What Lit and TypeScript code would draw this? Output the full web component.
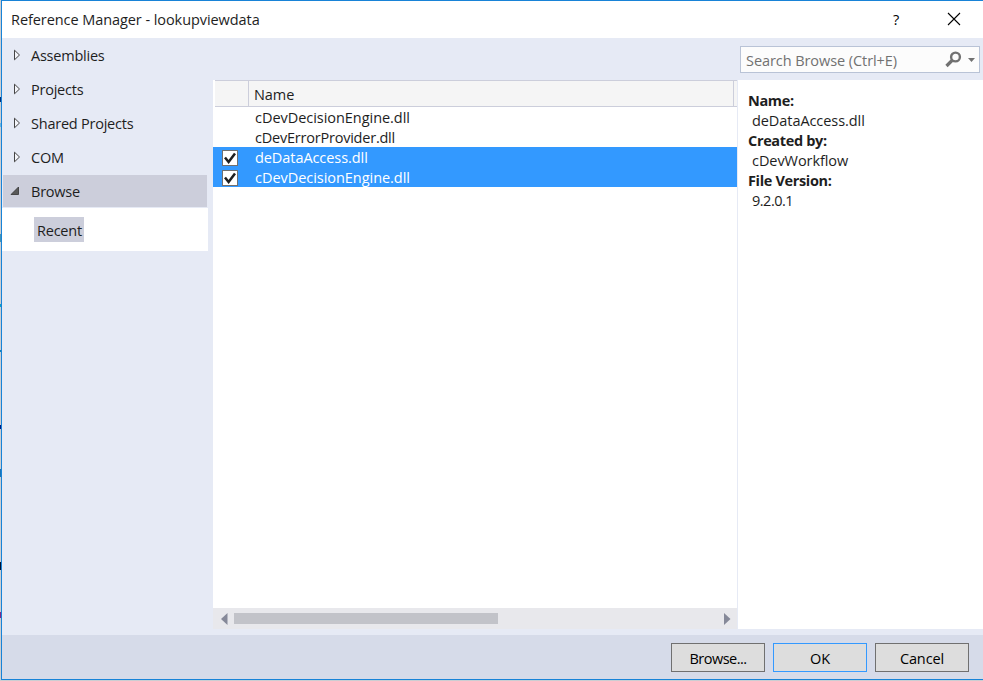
import { LitElement, html, css, svg, nothing } from "lit";
import { customElement, state } from "lit/decorators.js";
import { classMap } from "lit/directives/class-map.js";

interface RefRow {
  name: string;
  checked: boolean;
  tracking: number;
}

@customElement("app-root")
export class AppRoot extends LitElement {
  @state() private rows: RefRow[] = [
    { name: "cDevDecisionEngine.dll", checked: false, tracking: -0.04 },
    { name: "cDevErrorProvider.dll", checked: false, tracking: -0.22 },
    { name: "deDataAccess.dll", checked: true, tracking: -0.07 },
    { name: "cDevDecisionEngine.dll", checked: true, tracking: -0.04 },
  ];

  private groups = ["Assemblies", "Projects", "Shared Projects", "COM"];

  private specks = [
    { y: 97, h: 5, c: "#00307c" },
    { y: 123, h: 4, c: "#6cb6e0" },
    { y: 234, h: 8, c: "#4393b5" },
    { y: 304, h: 3, c: "#10a0c8" },
    { y: 350, h: 2, c: "#1080b8" },
    { y: 425, h: 4, c: "#001a80" },
    { y: 469, h: 8, c: "#1874b8" },
    { y: 562, h: 8, c: "#001030" },
    { y: 612, h: 6, c: "#802888" },
  ];

  static styles = css`
    :host {
      display: block;
      position: relative;
      width: 983px;
      height: 681px;
      overflow: hidden;
      background: #ccced2;
      font-family: "Open Sans", "Noto Sans", sans-serif;
      font-size: 14.5px;
      letter-spacing: -0.07px;
      line-height: 20px;
      color: #1e1e1e;
      white-space: nowrap;
    }
    * { box-sizing: border-box; }
    svg { display: block; flex: none; }
    .speck { position: absolute; left: 0; width: 1px; }
    .window {
      display: flex;
      flex-direction: column;
      height: 680px;
      margin-left: 1px;
      border: 1px solid #1883d7;
      border-right: 0;
      background: #e6eaf5;
    }
    .title {
      display: flex;
      align-items: center;
      height: 37px;
      flex: none;
      padding: 0 22px 0 9px;
      background: #fff;
    }
    .title svg { margin-bottom: 1px; }
    .title .caption { flex: 1; }
    .help { width: 8px; margin-right: 46px; color: #000; }
    .body { display: flex; flex: 1; min-height: 0; }
    .side { width: 211px; padding-top: 1px; letter-spacing: -0.23px; }
    .group {
      display: flex;
      align-items: center;
      height: 32px;
      margin: 0 1px 2px;
      padding-left: 9px;
    }
    .group span { padding-top: 2px; }
    .group svg { width: 12px; margin-right: 7px; }
    .group.open {
      width: 204px;
      background: #cccedb;
      margin-bottom: 1px;
      padding-left: 7px;
    }
    .group.open svg { margin-right: 9px; }
    .sub { width: 206px; height: 43px; padding: 9px 0 0 32px; background: #fff; }
    .chip {
      width: 50px;
      height: 25px;
      padding: 4px 0 0 3px;
      background: #cccedb;
    }
    .list {
      display: flex;
      flex-direction: column;
      width: 524px;
      height: 549px;
      margin-top: 42px;
      background: #fff;
    }
    .head {
      display: flex;
      height: 27px;
      margin-left: 2px;
      background: #f5f5f5;
      border: solid #cccedb;
      border-width: 1px 0;
      line-height: 27px;
    }
    .head .tick { width: 34px; border-right: 1px solid #cccedb; }
    .head .name { width: 485px; padding-left: 5px; border-right: 1px solid #cccedb; }
    .rows { flex: 1; }
    .row {
      display: flex;
      align-items: center;
      height: 20px;
      padding: 2px 0 0 42px;
    }
    .row.on { padding-left: 9px; background: #3399ff; color: #fff; }
    .box { width: 16px; height: 16px; margin-right: 17px; }
    .scroll {
      display: flex;
      align-items: center;
      height: 21px;
      padding: 0 6px 0 8px;
      background: #e8e8ec;
    }
    .track { flex: 1; padding-left: 6px; }
    .thumb { width: 264px; height: 11px; background: #c2c3c9; }
    .right { flex: 1; display: flex; flex-direction: column; padding-top: 8px; }
    .search {
      display: flex;
      align-items: center;
      width: 240px;
      height: 27px;
      margin: 0 0 7px 3px;
      padding-left: 5px;
      border: 1px solid #b9c3d6;
      background: #fcfcfc;
      color: #717171;
    }
    .search .hint { width: 199px; padding-top: 2px; }
    .details { height: 549px; margin-left: 1px; padding: 11px 0 0 10px; background: #fff; }
    .details dl, .details dd, .details dt { margin: 0; }
    .details dt { font-weight: 700; letter-spacing: -0.34px; }
    .details dd { padding-left: 4px; }
    .details .version { letter-spacing: -0.5px; }
    .foot {
      display: flex;
      justify-content: flex-end;
      gap: 8px;
      height: 44px;
      flex: none;
      padding: 8px 14px 0 0;
      background: #d6dbe9;
    }
    button {
      width: 94px;
      height: 29px;
      padding: 2px 0 0;
      border: 1px solid #707070;
      background: #ddd;
      font: inherit;
      letter-spacing: -0.1px;
      color: #000;
    }
    button.browse { letter-spacing: -0.5px; }
    button.default { border-color: #3399ff; }
  `;

  private toggle(i: number) {
    this.rows = this.rows.map((r, n) => (n === i ? { ...r, checked: !r.checked } : r));
  }

  private check() {
    return html`<svg class="box" viewBox="0 0 16 16">
      ${svg`<rect x=".5" y=".5" width="15" height="15" fill="#fff" stroke="#707070"/>
      <path d="M3 7.4 6.6 12 13 3.4" fill="none" stroke="#1e1e1e" stroke-width="2.5"/>`}
    </svg>`;
  }

  render() {
    return html`
      ${this.specks.map(
        (s) => html`<i class="speck" style="top:${s.y}px;height:${s.h}px;background:${s.c}"></i>`
      )}
      <div class="window">
        <div class="title">
          <span class="caption">Reference Manager - lookupviewdata</span>
          <span class="help">?</span>
          <svg width="14" height="14" viewBox="0 0 14 14">
            <path d="M1 1 13 13M13 1 1 13" fill="none" stroke="#000" stroke-width="1.1" />
          </svg>
        </div>
        <div class="body">
          <nav class="side">
            ${this.groups.map(
              (g) => html`<div class="group">
                <svg width="12" height="12" viewBox="0 0 12 12">
                  <path d="M2.5 1.2 7.5 6 2.5 10.8Z" fill="#f4f5fa" stroke="#444" />
                </svg>
                <span>${g}</span>
              </div>`
            )}
            <div class="group open">
              <svg width="12" height="12" viewBox="0 0 12 12">
                <path d="M8.5 2V9.5H1Z" fill="#595959" stroke="#333" stroke-width=".8" />
              </svg>
              <span>Browse</span>
            </div>
            <div class="sub"><div class="chip">Recent</div></div>
          </nav>
          <section class="list">
            <div class="head"><span class="tick"></span><span class="name">Name</span></div>
            <div class="rows">
              ${this.rows.map(
                (r, i) => html`<div
                  class=${classMap({ row: true, on: r.checked })}
                  @click=${() => this.toggle(i)}
                >
                  ${r.checked ? this.check() : nothing}<span style="letter-spacing:${r.tracking}px"
                    >${r.name}</span
                  >
                </div>`
              )}
            </div>
            <div class="scroll">
              <svg width="7" height="12" viewBox="0 0 7 12"><path d="M6.5 0V12L0 6Z" fill="#868999" /></svg>
              <div class="track"><div class="thumb"></div></div>
              <svg width="7" height="12" viewBox="0 0 7 12"><path d="M0 0V12L6.5 6Z" fill="#868999" /></svg>
            </div>
          </section>
          <section class="right">
            <div class="search">
              <span class="hint">Search Browse (Ctrl+E)</span>
              <svg width="17" height="17" viewBox="0 0 17 17">
                <circle cx="10.5" cy="6" r="4.4" fill="none" stroke="#717171" stroke-width="2.4" />
                <path d="M7.5 9 1.5 15" stroke="#717171" stroke-width="3.2" />
              </svg>
              <svg width="16" height="8" viewBox="0 0 16 8"><path d="M6 2H13L9.5 6Z" fill="#717171" /></svg>
            </div>
            <div class="details">
              <dl>
                <dt>Name:</dt>
                <dd>deDataAccess.dll</dd>
                <dt>Created by:</dt>
                <dd>cDevWorkflow</dd>
                <dt>File Version:</dt>
                <dd class="version">9.2.0.1</dd>
              </dl>
            </div>
          </section>
        </div>
        <footer class="foot">
          <button class="browse">Browse...</button>
          <button class="default">OK</button>
          <button>Cancel</button>
        </footer>
      </div>
    `;
  }
}
